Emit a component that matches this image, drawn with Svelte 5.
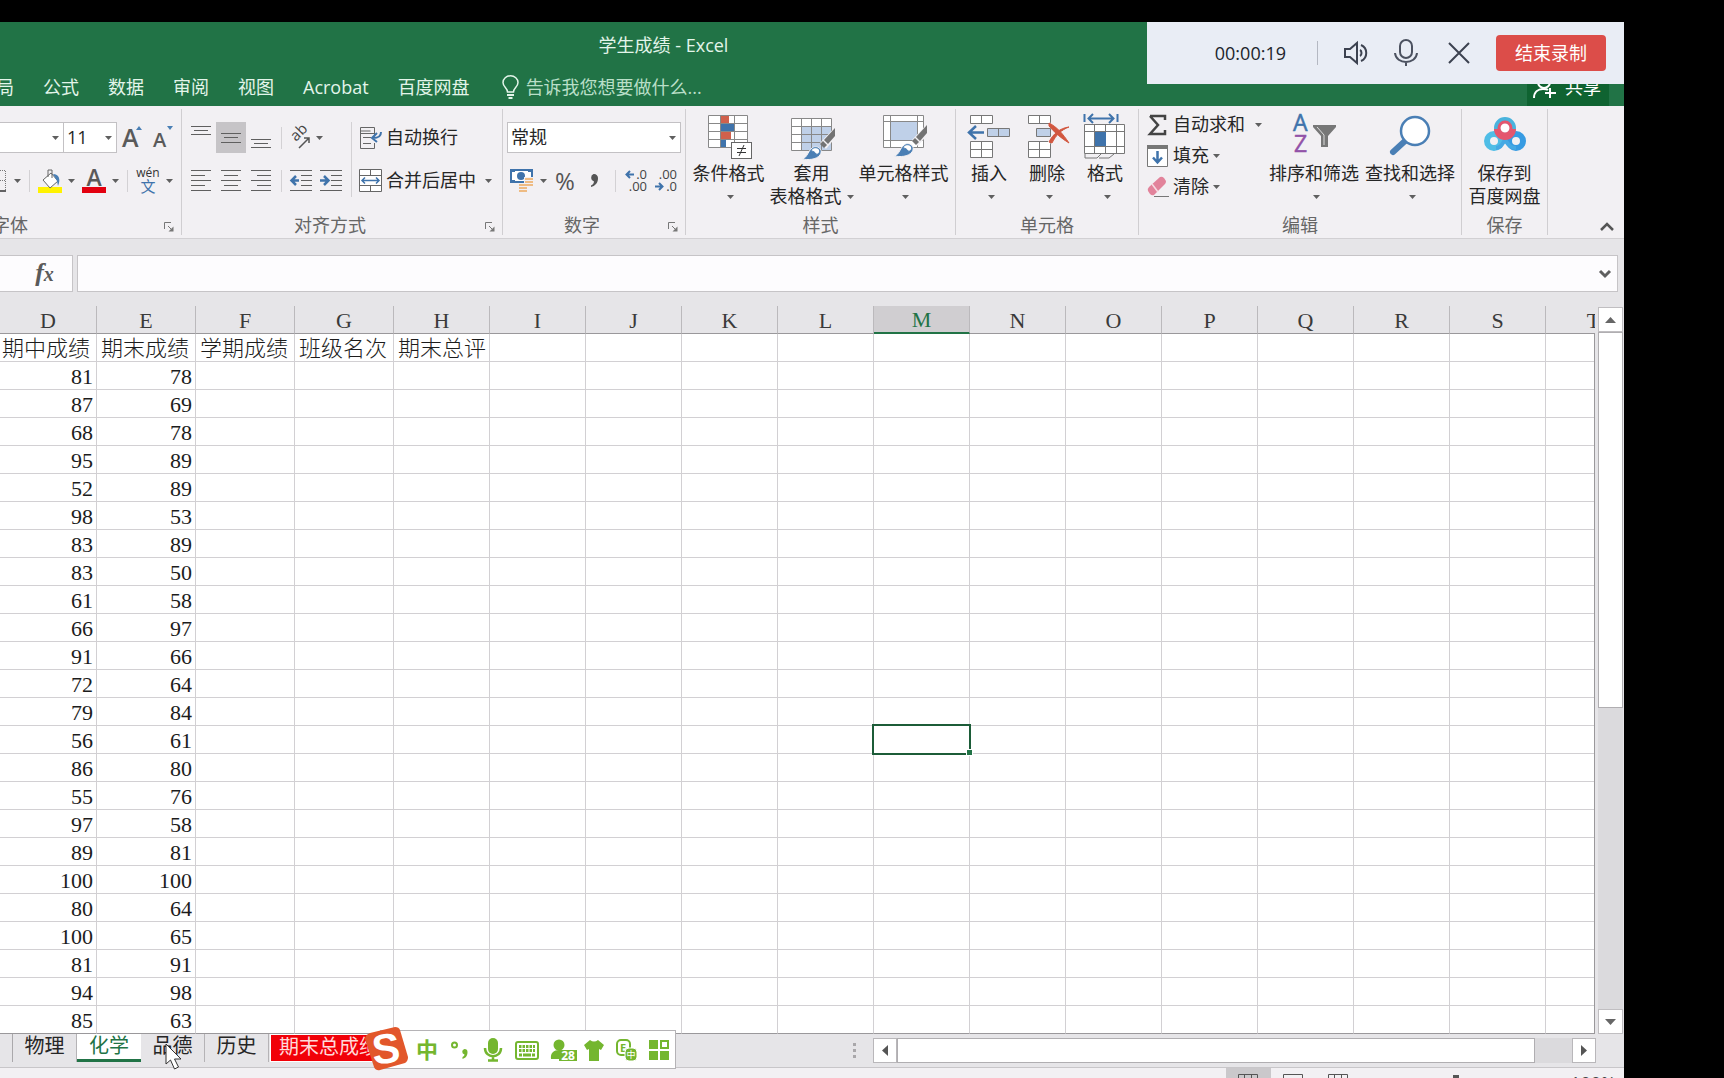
<script lang="ts">
  const menuTabs = ['局', '公式', '数据', '审阅', '视图', 'Acrobat', '百度网盘']

  const columns = 'DEFGHIJKLMNOPQRST'.split('')
  const activeColumn = 'M'
  const activeRow = 14

  const headings = ['期中成绩', '期末成绩', '学期成绩', '班级名次', '期末总评']
  const midterm = [81, 87, 68, 95, 52, 98, 83, 83, 61, 66, 91, 72, 79, 56, 86, 55, 97, 89, 100, 80, 100, 81, 94, 85]
  const final = [78, 69, 78, 89, 89, 53, 89, 50, 58, 97, 66, 64, 84, 61, 80, 76, 58, 81, 100, 64, 65, 91, 98, 63]

  const rows: (string | number)[][] = [headings, ...midterm.map((score, i) => [score, final[i]])]

  const sheets = [
    { name: '物理' },
    { name: '化学', active: true },
    { name: '品德' },
    { name: '历史' },
    { name: '期末总成绩', red: true },
  ]

  function colWidth(i: number) {
    if (i === 0) return 97
    return i < 4 ? 99 : 96
  }
</script>

{#snippet arrow()}
  <svg class="arrow" width="7" height="4" viewBox="0 0 7 4"><path d="M0 0h7L3.500 4z" fill="#5f5f5f" /></svg>
{/snippet}

{#snippet launcher(label: string)}
  <button class="launcher" aria-label={label}>
    <svg width="10" height="10" viewBox="0 0 10 10">
      <path d="M.5 7V.5H7M4 4l4 4" fill="none" stroke="#777" />
      <path d="M9.500 4.500v5h-5z" fill="#777" />
    </svg>
  </button>
{/snippet}

{#snippet lines(rowsOf: number[][], w: number, h: number)}
  <svg width={w} height={h} viewBox="0 0 {w} {h}">
    {#each rowsOf as [x, y, len]}
      <path d="M{x} {y + 0.5}h{len}" stroke="#5f5f5f" />
    {/each}
  </svg>
{/snippet}

{#snippet brush(dy: number)}
  <g transform="translate(0 {dy})">
    <path d="M46 12L30 29l6 6L46 23z" fill="#f2f0f3" />
    <path d="M45 14v8l-7 8-4-4z" fill="#737373" />
    <path d="M33 27l4 4-3 3-4-4z" fill="#737373" />
    <path d="M12 45c6-1 6-10 12-12 6-1 9 4 6 8-4 5-12 5-18 4z" fill="#4a7fb5" stroke="#f2f0f3" stroke-width="1" />
    <path d="M21 37c1-4 6-4 8-2 2 3-1 6-3 5-1-2-3-3-5-3z" fill="#fff" stroke="#4a7fb5" />
  </g>
{/snippet}

<div class="screen">
  <div class="window">
    <header class="top">
      <div class="title">学生成绩 - Excel</div>
      <nav class="menu">
        {#each menuTabs as tab}
          <button>{tab}</button>
        {/each}
        <button class="tell-me">
          <svg width="17" height="24" viewBox="0 0 17 24" fill="none" stroke="#e3f5ea" stroke-width="1.500">
            <path d="M5.500 17c0-4-4.500-5-4.500-9.500a7.500 6.700 0 0 1 15 0C16 12 11.500 13 11.500 17z" />
            <path d="M5 20h7M6.500 23h4" stroke-width="2" />
          </svg>
          <span>告诉我您想要做什么...</span>
        </button>
        <button class="share">
          <svg width="24" height="24" viewBox="0 0 24 24" fill="none" stroke="#fff" stroke-width="2">
            <circle cx="11" cy="7" r="6" />
            <path d="M1 23c0-6 4-9 9-9 2 0 4 0 5 1M17 13v10M12 18h11" />
          </svg>
          <span>共享</span>
        </button>
      </nav>

      <div class="recorder">
        <time>00:00:19</time>
        <span class="recorder__sep"></span>
        <button aria-label="声音">
          <svg width="24" height="24" viewBox="0 0 24 24" fill="none" stroke="#3c4250" stroke-width="2">
            <path d="M1 8h5l7-6v20l-7-6H1zM16 9c2 1 2 5 0 6M17 4c7 3 7 13 0 16" />
          </svg>
        </button>
        <button aria-label="麦克风">
          <svg width="24" height="28" viewBox="0 0 24 28" fill="none" stroke="#4c5260" stroke-width="2">
            <rect x="6" y="1" width="12" height="18" rx="6" />
            <path d="M1 14c1 12 21 12 22 0M12 23v4" />
          </svg>
        </button>
        <button class="recorder__close" aria-label="关闭">
          <svg width="22" height="22" viewBox="0 0 22 22" fill="none" stroke="#3c4250" stroke-width="2">
            <path d="M1 1l20 20M21 1L1 21" />
          </svg>
        </button>
        <button class="recorder__stop">结束录制</button>
      </div>
    </header>

    <section class="ribbon">
      <div class="group group--font">
        <div class="group__body">
          <div class="rows">
            <div class="row">
              <span class="combo combo--name">
                <select aria-label="字体名称"><option></option></select>
                {@render arrow()}
              </span>
              <span class="combo combo--size">
                <select aria-label="字号"><option>11</option></select>
                {@render arrow()}
              </span>
              <button class="grow" aria-label="增大字号">
                <svg width="20" height="26" viewBox="0 0 20 26">
                  <text x="-1" y="22" font-size="25" font-weight="600" fill="#5a5a5a">A</text>
                  <path d="M13 5l3-4 3 4z" fill="#4a7fb5" />
                </svg>
              </button>
              <button class="shrink" aria-label="减小字号">
                <svg width="20" height="26" viewBox="0 0 20 26">
                  <text x="-1" y="22" font-size="20" font-weight="600" fill="#5a5a5a">A</text>
                  <path d="M13 1l3 4 3-4z" fill="#4a7fb5" />
                </svg>
              </button>
            </div>
            <div class="row">
              <button class="split" aria-label="边框">
                <svg width="8" height="22" viewBox="0 0 8 22">
                  <path d="M0 .5h5.500V21M0 10.500h5" fill="none" stroke="#777" stroke-dasharray="1 1" />
                  <path d="M0 21h6" stroke="#333" stroke-width="1.500" />
                </svg>
                {@render arrow()}
              </button>
              <span class="sep"></span>
              <button class="split" aria-label="填充颜色">
                <svg width="24" height="24" viewBox="0 0 24 24">
                  <rect y="18" width="24" height="6" fill="#fff200" />
                  <path d="M5 11l8-7 7 8-8 7z" fill="#fff" stroke="#666" />
                  <path d="M10 8V1h4v8" fill="none" stroke="#666" />
                  <path d="M15 5c6 0 8 5 5 12l-1-5z" fill="#4a7fb5" />
                </svg>
                {@render arrow()}
              </button>
              <button class="split split--next" aria-label="字体颜色">
                <svg width="24" height="24" viewBox="0 0 24 24">
                  <text x="12" y="17" font-size="23" font-weight="600" fill="#5a5a5a" text-anchor="middle">A</text>
                  <rect y="18" width="24" height="6" fill="#e3000f" />
                </svg>
                {@render arrow()}
              </button>
              <span class="sep"></span>
              <button class="split" aria-label="拼音指南">
                <svg width="24" height="26" viewBox="0 0 24 26">
                  <text x="12" y="9" font-size="12" fill="#333" text-anchor="middle">wén</text>
                  <text x="12" y="24" font-size="15" fill="#3f73ab" text-anchor="middle">文</text>
                </svg>
                {@render arrow()}
              </button>
            </div>
          </div>
        </div>
        <div class="group__label">字体</div>
        {@render launcher('字体设置')}
      </div>

      <div class="group group--align">
        <div class="group__body">
          <div class="rows">
            <div class="row">
              <button class="tool" aria-label="顶端对齐">{@render lines([[0, 2, 20], [3, 6, 14], [0, 10, 20]], 20, 28)}</button>
              <button class="tool tool--on" aria-label="垂直居中">{@render lines([[0, 9, 20], [3, 13, 14], [0, 18, 20]], 20, 28)}</button>
              <button class="tool" aria-label="底端对齐">{@render lines([[0, 15, 20], [3, 19, 14], [0, 23, 20]], 20, 28)}</button>
              <span class="sep sep--tight"></span>
              <button class="split orient" aria-label="方向">
                <svg width="20" height="22" viewBox="0 0 20 22">
                  <text x="6" y="15" font-size="15" fill="#444" transform="rotate(-45 6 15)">ab</text>
                  <path d="M9 21L19 11M14 11h5v5" fill="none" stroke="#555" stroke-width="1.500" />
                </svg>
                {@render arrow()}
              </button>
            </div>
            <div class="row">
              <button class="tool" aria-label="左对齐">{@render lines([[0, 1, 20], [0, 6, 14], [0, 11, 20], [0, 16, 14], [0, 21, 20]], 20, 24)}</button>
              <button class="tool" aria-label="居中">{@render lines([[0, 1, 20], [3, 6, 14], [0, 11, 20], [3, 16, 14], [0, 21, 20]], 20, 24)}</button>
              <button class="tool" aria-label="右对齐">{@render lines([[0, 1, 20], [6, 6, 14], [0, 11, 20], [6, 16, 14], [0, 21, 20]], 20, 24)}</button>
              <span class="sep sep--tight"></span>
              {#each [{ label: '减少缩进量', d: 'M9 11.500H2M6 7l-4.500 4.500L6 16' }, { label: '增加缩进量', d: 'M0 11.500h8M4 7l4.500 4.500L4 16' }] as indent}
                <button class="tool" aria-label={indent.label}>
                  <svg width="22" height="24" viewBox="0 0 22 24" fill="none">
                    <path d="M0 1.500h22M11 6.500h11M11 11.500h11M11 16.500h11M0 21.500h22" stroke="#5f5f5f" />
                    <path d={indent.d} stroke="#3f73ab" stroke-width="2.500" />
                  </svg>
                </button>
              {/each}
            </div>
          </div>
          <span class="sep sep--tall"></span>
          <div class="rows">
            <div class="row">
              <button class="labelled">
                <svg width="24" height="24" viewBox="0 0 24 24" fill="none" stroke="#666">
                  <path d="M15.500 9V1.500h-14v21h14V17M1.500 7.500h14M4 11.500h8M4 17.500h8M1.500 5h10" />
                  <path d="M22 6c0 5-3 6-8 6M18 7l-5 5 5 4" stroke="#3f73ab" stroke-width="2" />
                </svg>
                <span>自动换行</span>
              </button>
            </div>
            <div class="row">
              <button class="labelled labelled--split">
                <svg width="24" height="24" viewBox="0 0 24 24" fill="none" stroke="#666">
                  <path d="M.5 .5h22v22H.5zM.5 6.500h22M.5 16.500h22M11.500 .5v6M11.500 16.500v6" fill="#fff" />
                  <path d="M3 11.500h17M6 8.500l-3 3 3 3M17 8.500l3 3-3 3" stroke="#3f73ab" stroke-width="1.500" />
                </svg>
                <span>合并后居中</span>
                {@render arrow()}
              </button>
            </div>
          </div>
        </div>
        <div class="group__label">对齐方式</div>
        {@render launcher('对齐设置')}
      </div>

      <div class="group group--number">
        <div class="group__body">
          <div class="rows">
            <div class="row">
              <span class="combo combo--format">
                <select aria-label="数字格式"><option>常规</option></select>
                {@render arrow()}
              </span>
            </div>
            <div class="row row--number">
              <button class="split" aria-label="会计数字格式">
                <svg width="24" height="24" viewBox="0 0 24 24">
                  <rect x="1" y="1" width="21" height="12" fill="#fff" stroke="#3f73ab" stroke-width="2" />
                  <path d="M0 0h5v3H0zM18 0h5v3h-5zM0 11h5v3H0z" fill="#3f73ab" />
                  <circle cx="11" cy="7" r="4" fill="#3f73ab" />
                  <path d="M14 8h10v11H14z" fill="#f2f0f3" />
                  <path d="M15 10h8M15 13h8M15 16h8M9 16h8M9 19h8M9 22h8" stroke="#eebb83" stroke-width="2" />
                </svg>
                {@render arrow()}
              </button>
              <button class="percent" aria-label="百分比样式">%</button>
              <button class="comma" aria-label="千位分隔样式">
                <svg width="10" height="15" viewBox="0 0 10 15">
                  <path d="M4.500 1a4 4 0 0 1 4.500 4.500C9 10 6 13 2 14v-1.500c2-1 3-2.500 3-4A4 4 0 0 1 4.500 1z" fill="#555" />
                </svg>
              </button>
              <span class="sep"></span>
              <button aria-label="增加小数位数">
                <svg width="24" height="24" viewBox="0 0 24 24" font-size="13" fill="#444">
                  <text x="23" y="10" text-anchor="end">.0</text>
                  <text x="23" y="22" text-anchor="end">.00</text>
                  <path d="M10 5.500H3M6 2L2.500 5.500 6 9" fill="none" stroke="#3f73ab" stroke-width="2" />
                </svg>
              </button>
              <button class="decimal" aria-label="减少小数位数">
                <svg width="24" height="24" viewBox="0 0 24 24" font-size="13" fill="#444">
                  <text x="23" y="10" text-anchor="end">.00</text>
                  <text x="23" y="22" text-anchor="end">.0</text>
                  <path d="M1 17.500h7M5 14l3.500 3.500L5 21" fill="none" stroke="#3f73ab" stroke-width="2" />
                </svg>
              </button>
            </div>
          </div>
        </div>
        <div class="group__label">数字</div>
        {@render launcher('数字设置')}
      </div>

      <div class="group group--styles">
        <div class="group__body group__body--big">
          <button class="big">
            <svg width="44" height="46" viewBox="0 0 44 46">
              <path d="M1.500 1.500h39v32h-39zM13.500 1.500v32M27.500 1.500v32M1.500 9.500h39M1.500 17.500h39M1.500 25.500h39" fill="#fff" stroke="#888" />
              <path d="M14 2h8v7h-8zM14 18h10v7H14z" fill="#d0614c" />
              <path d="M14 10h13v7H14zM14 26h5v7h-5z" fill="#3f73ab" />
              <rect x="24.500" y="28.500" width="20" height="16" fill="#fff" stroke="#666" />
              <path d="M30 34.500h9M30 38.500h9M37 31l-5 11" stroke="#333" />
            </svg>
            <span>条件格式</span>
            <span class="big__more big__more--arrow">{@render arrow()}</span>
          </button>
          <button class="big">
            <svg width="44" height="46" viewBox="0 0 44 46">
              <rect x="1.500" y="4.500" width="40" height="32" fill="#fff" />
              <rect x="12" y="12" width="29" height="24" fill="#bfd0e8" />
              <path d="M1.500 4.500h40v32h-40zM11.500 4.500v32M21.500 4.500v32M31.500 4.500v32M1.500 12.500h40M1.500 20.500h40M1.500 28.500h40" fill="none" stroke="#888" />
              {@render brush(0)}
            </svg>
            <span>套用</span>
            <span class="big__more">表格格式 {@render arrow()}</span>
          </button>
          <button class="big">
            <svg width="44" height="46" viewBox="0 0 44 46">
              <path d="M1.500 1.500h40v32h-40zM8.500 1.500v32M35.500 1.500v32M1.500 7.500h40M1.500 26.500h40" fill="#fff" stroke="#888" />
              <rect x="9" y="8" width="26" height="18" fill="#bfd0e8" />
              {@render brush(-3)}
            </svg>
            <span>单元格样式</span>
            <span class="big__more big__more--arrow">{@render arrow()}</span>
          </button>
        </div>
        <div class="group__label">样式</div>
      </div>

      <div class="group group--cells">
        <div class="group__body group__body--big group__body--cells">
          <button class="big">
            <svg width="44" height="46" viewBox="0 0 44 46">
              <path d="M3.500 1.500h22v8h-22zM14.500 1.500v8M3.500 27.500h22v16h-22zM14.500 27.500v16M3.500 35.500h22" fill="#fff" stroke="#777" />
              <path d="M20.500 14.500h22v8h-22zM31.500 14.500v8" fill="#bfd0e8" stroke="#777" />
              <path d="M17 18.500H2M9 12l-7 6.500L9 25" fill="none" stroke="#3f73ab" stroke-width="2.500" />
            </svg>
            <span>插入</span>
            <span class="big__more big__more--arrow">{@render arrow()}</span>
          </button>
          <button class="big">
            <svg width="44" height="46" viewBox="0 0 44 46">
              <path d="M3.500 1.500h22v8h-22zM14.500 1.500v8M3.500 27.500h22v16h-22zM14.500 27.500v16M3.500 35.500h22" fill="#fff" stroke="#777" />
              <path d="M11.500 14.500h14v8h-14z" fill="#bfd0e8" stroke="#777" />
              <path d="M25 10c7 4 13 11 18 19M43 12c-8 4-13 9-18 17" fill="none" stroke="#f2f0f3" stroke-width="5" />
              <path d="M24 9c8 4 14 11 20 20-7-4-15-11-20-17zM44 13c-8 3-13 8-17 16l-3-1c4-8 11-14 20-15z" fill="#d2573f" stroke="#d2573f" />
            </svg>
            <span>删除</span>
            <span class="big__more big__more--arrow">{@render arrow()}</span>
          </button>
          <button class="big">
            <svg width="44" height="46" viewBox="0 0 44 46">
              <path d="M1.500 0v8M34.500 0v8M6 4.500h24M10 0L5.500 4.500 10 9M26 0l4.500 4.500L26 9" fill="none" stroke="#3f73ab" stroke-width="2" />
              <path d="M1.500 10.500h40v29h-40zM11.500 10.500v29M22.500 10.500v29M33.500 10.500v29M1.500 17.500h40M1.500 32.500h40" fill="#fff" stroke="#777" />
              <path d="M12 18h11v14H12z" fill="#3f73ab" />
              <path d="M2 40v4h12l4-4M16 44h10l5-4" fill="none" stroke="#777" />
            </svg>
            <span>格式</span>
            <span class="big__more big__more--arrow">{@render arrow()}</span>
          </button>
        </div>
        <div class="group__label">单元格</div>
      </div>

      <div class="group group--edit">
        <div class="group__body group__body--edit">
          <div class="stack">
            <button class="labelled labelled--split">
              <svg width="22" height="22" viewBox="0 0 22 22">
                <path d="M3 2h15v4M3 2l8 9-8 9h15v-4" fill="none" stroke="#444" stroke-width="2.500" />
              </svg>
              <span>自动求和</span>
              {@render arrow()}
            </button>
            <button class="labelled">
              <svg width="22" height="22" viewBox="0 0 22 22">
                <path d="M.5 .5h20v21H.5z" fill="#fff" stroke="#777" />
                <path d="M0 0h21v4H0z" fill="#777" />
                <path d="M10.500 6v11M6 12.500l4.500 5 4.500-5" fill="none" stroke="#3f73ab" stroke-width="2.500" />
              </svg>
              <span>填充</span>
              {@render arrow()}
            </button>
            <button class="labelled">
              <svg width="22" height="22" viewBox="0 0 22 22">
                <path d="M13 1q2-1 4 1l2 3q0 2-1 3L7 19q-2 1-4-1l-2-3q-1-2 1-4z" fill="#e2839b" />
                <path d="M5 8l6 8" stroke="#f7dbe2" stroke-width="1.500" />
                <path d="M7 20.500h15" stroke="#777" />
              </svg>
              <span>清除</span>
              {@render arrow()}
            </button>
          </div>
          <button class="big">
            <svg width="46" height="46" viewBox="0 0 46 46">
              <text x="2" y="17" font-size="23" fill="#3f73ab" stroke="#3f73ab" stroke-width="0.500">A</text>
              <text x="3" y="38" font-size="23" fill="#9252a8" stroke="#9252a8" stroke-width="0.500">Z</text>
              <path d="M22 11h23v2l-8 9v11h-7V22l-8-9z" fill="#777" />
              <path d="M26 13l7 8v10" fill="none" stroke="#ddd" />
            </svg>
            <span>排序和筛选</span>
            <span class="big__more big__more--arrow">{@render arrow()}</span>
          </button>
          <button class="big">
            <svg width="46" height="46" viewBox="0 0 46 46">
              <path d="M18 27L6 38" stroke="#4a7fb5" stroke-width="6" stroke-linecap="round" />
              <circle cx="28" cy="17" r="14" fill="#fff" stroke="#4a7fb5" stroke-width="2.500" />
            </svg>
            <span>查找和选择</span>
            <span class="big__more big__more--arrow">{@render arrow()}</span>
          </button>
        </div>
        <div class="group__label">编辑</div>
      </div>

      <div class="group group--save">
        <div class="group__body group__body--big">
          <button class="big">
            <svg width="46" height="46" viewBox="0 0 46 46" fill="none" stroke-width="6">
              <circle cx="12" cy="27" r="7" stroke="#4fbde6" />
              <circle cx="34" cy="27" r="7" stroke="#379be2" />
              <path d="M14 34c5 0 6-4 9-8 3 4 5 8 11 8" stroke="#45a9e4" stroke-width="4" />
              <circle cx="23" cy="14" r="8" fill="#fff" stroke="#49b3dd" />
              <path d="M15 15a8 8 0 0 0 16 0" stroke="#e4566e" />
              <circle cx="23" cy="14" r="6" stroke="#e4566e" stroke-width="3" />
            </svg>
            <span>保存到</span>
            <span class="big__more">百度网盘</span>
          </button>
        </div>
        <div class="group__label">保存</div>
      </div>

      <button class="collapse" aria-label="折叠功能区">
        <svg width="14" height="10" viewBox="0 0 14 10"><path d="M1 9l6-6 6 6" fill="none" stroke="#555" stroke-width="2.500" /></svg>
      </button>
    </section>

    <section class="formula">
      <button class="formula__fx" aria-label="插入函数">f<small>x</small></button>
      <div class="formula__box">
        <input type="text" aria-label="编辑栏" />
        <button aria-label="展开编辑栏">
          <svg width="12" height="10" viewBox="0 0 12 10"><path d="M1 2l5 5 5-5" fill="none" stroke="#5f5f5f" stroke-width="3" /></svg>
        </button>
      </div>
    </section>

    <section class="sheet">
      <div class="sheet__view">
        <table>
          <colgroup>
            {#each columns as _, i}
              <col style="width: {colWidth(i)}px" />
            {/each}
          </colgroup>
          <thead>
            <tr>
              {#each columns as col}
                <th scope="col" class:active={col === activeColumn}>{col}</th>
              {/each}
            </tr>
          </thead>
          <tbody>
            {#each rows as row, r}
              <tr>
                {#each columns as col, c}
                  <td class:num={r > 0} class:selected={r === activeRow && col === activeColumn}>{row[c] ?? ''}</td>
                {/each}
              </tr>
            {/each}
          </tbody>
        </table>
      </div>
      <div class="vscroll">
        <button aria-label="向上滚动"><svg width="11" height="6" viewBox="0 0 11 6"><path d="M0 6h11L5.500 0z" fill="#666" /></svg></button>
        <div class="vscroll__track"><div class="vscroll__thumb"></div></div>
        <button aria-label="向下滚动"><svg width="11" height="6" viewBox="0 0 11 6"><path d="M0 0h11L5.500 6z" fill="#666" /></svg></button>
      </div>
    </section>

    <section class="bottom">
      <div class="sheets">
        {#each sheets as sheet}
          <button class:active={sheet.active} class:red={sheet.red}>{sheet.name}</button>
        {/each}
      </div>
      <div class="hscroll">
        <span class="hscroll__grip"></span>
        <button aria-label="向左滚动"><svg width="6" height="11" viewBox="0 0 6 11"><path d="M6 0v11L0 5.500z" fill="#555" /></svg></button>
        <div class="hscroll__track"><div class="hscroll__thumb"></div></div>
        <button aria-label="向右滚动"><svg width="6" height="11" viewBox="0 0 6 11"><path d="M0 0v11l6-5.500z" fill="#555" /></svg></button>
      </div>

      <div class="ime">
        <svg class="ime__logo" width="44" height="44" viewBox="0 0 44 44">
          <path d="M6 6L31 0q4 0 5 3l8 27q0 4-3 6L16 43q-4 1-6-3L1 12q0-4 5-6z" fill="#e2572b" />
          <text x="22" y="36" font-size="42" font-weight="700" font-family="Liberation Sans, sans-serif" fill="#fff" text-anchor="middle" transform="rotate(-6 22 22)">S</text>
        </svg>
        <button class="ime__zh">中</button>
        <button aria-label="标点">
          <svg width="22" height="24" viewBox="0 0 22 24">
            <circle cx="5.500" cy="7" r="2.500" fill="none" stroke="#74b62f" stroke-width="2" />
            <path d="M15.500 11a3 3 0 0 1 3 3c0 4-2 6-5 7v-2c1-.5 2-1.500 2-2.500a2.800 2.800 0 0 1 0-5.500z" fill="#74b62f" />
          </svg>
        </button>
        <button aria-label="语音">
          <svg width="22" height="24" viewBox="-2 0 22 24" fill="#74b62f">
            <rect x="4" y="0" width="10" height="16" rx="5" />
            <path d="M1 10c0 11 16 11 16 0M9 18v4M4 22.500h10" fill="none" stroke="#74b62f" stroke-width="2.500" />
          </svg>
        </button>
        <button aria-label="软键盘">
          <svg width="24" height="24" viewBox="0 0 24 24">
            <rect x="1" y="4" width="22" height="17" rx="2" fill="#fff" stroke="#74b62f" stroke-width="2" />
            <path d="M4 8.500h16M4 12.500h16" stroke="#74b62f" stroke-width="3" stroke-dasharray="2.500 1" />
            <path d="M4 17h3M8 17h8M17 17h3" stroke="#74b62f" stroke-width="3" />
          </svg>
        </button>
        <button class="ime__user" aria-label="用户">
          <svg width="28" height="24" viewBox="0 0 28 24">
            <circle cx="9" cy="7" r="5.500" fill="#74b62f" />
            <path d="M1 21c-1-6 3-9 8-9s8 3 8 9z" fill="#74b62f" />
            <rect x="9" y="12" width="18" height="11" fill="#74b62f" />
            <text x="18" y="22" font-size="12" font-weight="700" fill="#fff" text-anchor="middle">28</text>
          </svg>
        </button>
        <button aria-label="皮肤">
          <svg width="22" height="24" viewBox="0 0 22 24">
            <path d="M7 2q4 3 8 0l6 5-3 5-2-1v12H6V11l-2 1-3-5z" fill="#74b62f" />
          </svg>
        </button>
        <button aria-label="翻译">
          <svg width="22" height="24" viewBox="0 0 22 24">
            <rect x="1" y="2" width="13" height="15" rx="4" fill="#fff" stroke="#74b62f" stroke-width="2" />
            <text x="7" y="14" font-size="11" font-weight="700" fill="#74b62f" text-anchor="middle">E</text>
            <rect x="9" y="10" width="12" height="13" rx="4" fill="#74b62f" stroke="#fff" />
            <text x="15" y="20" font-size="9" fill="#fff" text-anchor="middle">中</text>
          </svg>
        </button>
        <button aria-label="工具箱">
          <svg width="20" height="24" viewBox="0 0 20 24" fill="#74b62f">
            <rect x="0" y="2" width="9" height="9" />
            <rect x="12" y="3" width="7" height="7" fill="#fff" stroke="#74b62f" stroke-width="2" />
            <rect x="0" y="13" width="9" height="9" />
            <rect x="11" y="13" width="9" height="9" />
          </svg>
        </button>
      </div>

      <svg class="cursor" width="18" height="27" viewBox="0 0 18 27">
        <path d="M1 1v20l4.500-4 4 9 4-2-4-8H16z" fill="#fff" stroke="#333" />
      </svg>
    </section>

    <footer class="status">
      <button class="status__view status__view--on" aria-label="普通">
        <svg width="20" height="18" viewBox="0 0 20 18"><path d="M.5 .5h19v17H.5zM6.500 .5v17M13.500 .5v17M.5 6.500h19M.5 12.500h19" fill="none" stroke="#555" /></svg>
      </button>
      <button class="status__view" aria-label="页面布局">
        <svg width="20" height="18" viewBox="0 0 20 18"><path d="M.5 .5h19v17H.5zM4.500 4.500h11v9h-11zM5 7.500h10" fill="none" stroke="#555" /></svg>
      </button>
      <button class="status__view" aria-label="分页预览">
        <svg width="20" height="18" viewBox="0 0 20 18"><path d="M.5 .5h19v17H.5zM6.500 .5v11M13.500 .5v11M.5 7.500h19" fill="none" stroke="#555" /></svg>
      </button>
      <input class="zoom" type="range" min="0" max="100" value="50" aria-label="缩放" />
      <button class="status__plus">+</button>
      <span class="status__percent">100%</span>
    </footer>
  </div>
</div>

<style>
  :global(body) {
    background: #000;
  }

  .screen {
    box-sizing: border-box;
    height: 100vh;
    padding: 22px 100px 0 0;
    overflow: hidden;
    background: #000;
    font-family: 'Open Sans', 'Noto Sans CJK SC', sans-serif;
    font-size: 18px;
    line-height: 23px;
    color: #262626;
  }

  .window {
    overflow: hidden;
    height: 100%;
    background: #e6e5e8;
  }

  button,
  select,
  input {
    margin: 0;
    padding: 0;
    border: none;
    border-radius: 0;
    background: none;
    font: inherit;
    color: inherit;
    white-space: nowrap;
  }

  svg {
    display: block;
    flex: none;
    overflow: visible;
  }

  .top {
    position: relative;
    background: #217346;
    color: #e3f5ea;
  }

  .title {
    padding-right: 297px;
    line-height: 46px;
    text-align: center;
  }

  .menu {
    display: flex;
    align-items: center;
    gap: 29px;
    height: 38px;
    margin-left: -4px;
  }

  .tell-me {
    display: flex;
    align-items: center;
    gap: 7px;
    padding-left: 3px;
    color: #b9dfc8;
  }

  .share {
    display: flex;
    align-items: center;
    gap: 8px;
    height: 37px;
    margin: 0 15px 0 auto;
    padding: 0 8px 0 6px;
    background: #0f6331;
    color: #fff;
  }

  .recorder {
    position: absolute;
    top: 0;
    right: 0;
    display: flex;
    align-items: center;
    box-sizing: border-box;
    height: 62px;
    padding: 0 18px 0 68px;
    background: #e9edf5;
    color: #20242c;
  }

  .recorder button {
    margin-left: 26px;
  }

  .recorder .recorder__close {
    margin-left: 30px;
  }

  .recorder__sep {
    width: 1px;
    height: 24px;
    margin-left: 31px;
    background: #b4b8c2;
  }

  .recorder .recorder__stop {
    padding: 0 19px;
    border-radius: 4px;
    background: #dc4d49;
    color: #fff;
    line-height: 36px;
  }

  .ribbon {
    display: flex;
    height: 132px;
    border-bottom: 1px solid #d2d0d3;
    background: #f2f0f3;
  }

  .group {
    position: relative;
    display: flex;
    flex: none;
    flex-direction: column;
    box-sizing: border-box;
    margin: 3px 0;
    border-right: 1px solid #d0ced1;
  }

  .group--font { width: 182px; }
  .group--align { width: 321px; }
  .group--number { width: 183px; }
  .group--styles { width: 270px; }
  .group--cells { width: 183px; }
  .group--edit { width: 323px; }
  .group--save { width: 86px; }

  .group__body {
    display: flex;
    flex: 1;
  }

  .group--align .group__body,
  .group--number .group__body {
    padding-left: 4px;
  }

  .group__body--big {
    justify-content: center;
    gap: 5px;
    padding-top: 5px;
  }

  .group__body--cells {
    gap: 14px;
  }

  .group__label {
    color: #666;
    line-height: 20px;
    text-align: center;
  }

  .group--align .group__label,
  .group--number .group__label {
    padding-right: 24px;
  }

  .group--font .group__label {
    margin-left: -8px;
    text-align: left;
  }

  .launcher {
    position: absolute;
    right: 7px;
    bottom: 3px;
  }

  .rows {
    display: flex;
    flex-direction: column;
    gap: 12px;
    padding-top: 13px;
  }

  .row {
    display: flex;
    align-items: center;
    height: 31px;
  }

  .row--number {
    padding-left: 3px;
  }

  .combo {
    display: flex;
    align-items: center;
    box-sizing: border-box;
    height: 31px;
    padding-right: 4px;
    border: 1px solid #c3c1c4;
    background: #fff;
  }

  .combo select {
    flex: 1;
    min-width: 0;
    padding-left: 3px;
    appearance: none;
  }

  .combo--name {
    width: 64px;
    border-left: none;
  }

  .combo--size {
    width: 54px;
    margin-left: -1px;
  }

  .combo--format {
    width: 174px;
  }

  .grow {
    margin-left: 6px;
  }

  .shrink {
    margin-left: 11px;
  }

  .split {
    display: flex;
    align-items: center;
    gap: 6px;
  }

  .split--next {
    margin-left: 7px;
  }

  .orient {
    margin-left: 4px;
  }

  .sep {
    width: 1px;
    height: 22px;
    margin: 0 8px;
    background: #d3d1d4;
  }

  .sep--tight {
    margin: 0 4px 0 5px;
  }

  .sep--tall {
    height: 75px;
    margin: 13px 7px 0 5px;
  }

  .tool {
    display: flex;
    align-items: center;
    justify-content: center;
    width: 30px;
    height: 31px;
  }

  .tool--on {
    background: #c6c4c7;
  }

  .labelled {
    display: flex;
    align-items: center;
    gap: 3px;
  }

  .labelled--split .arrow {
    margin-left: 6px;
  }

  .percent {
    margin-left: 8px;
    font-size: 24px;
    color: #555;
  }

  .comma {
    margin: 0 8px 0 14px;
  }

  .decimal {
    margin-left: 6px;
  }

  .big {
    display: flex;
    flex-direction: column;
    align-items: center;
    align-self: flex-start;
  }

  .big > svg {
    margin-bottom: 2px;
  }

  .big__more {
    display: flex;
    align-items: center;
    gap: 5px;
    height: 23px;
  }

  .big__more--arrow {
    padding-left: 4px;
  }

  .group__body--cells .big {
    width: 44px;
  }

  .group__body--edit {
    gap: 6px;
    padding-left: 8px;
  }

  .group__body--edit .big {
    padding-top: 5px;
  }

  .stack {
    display: flex;
    flex-direction: column;
  }

  .stack .labelled {
    gap: 4px;
    height: 31px;
  }

  .stack .labelled--split .arrow {
    margin: 0 1px 0 6px;
  }

  .collapse {
    align-self: flex-end;
    margin: 0 10px 7px auto;
  }

  .formula {
    display: flex;
    gap: 4px;
    padding: 16px 6px 14px 0;
  }

  .formula__fx {
    width: 73px;
    height: 37px;
    box-sizing: border-box;
    padding-left: 17px;
    border: 1px solid #c6c4c7;
    border-left: none;
    background: #fdfcfe;
    color: #5a5a5a;
    font: italic 700 26px/30px 'Liberation Serif', serif;
  }

  .formula__fx small {
    font-size: 20px;
  }

  .formula__box {
    display: flex;
    flex: 1;
    box-sizing: border-box;
    height: 37px;
    padding-right: 6px;
    border: 1px solid #c6c4c7;
    background: #fdfcfe;
  }

  .formula__box input {
    flex: 1;
    padding-left: 6px;
  }

  .sheet {
    display: flex;
  }

  .sheet__view {
    position: relative;
    flex: 1;
    min-width: 0;
    overflow: hidden;
    background: #fff;
  }

  .sheet__view::after {
    content: '';
    position: absolute;
    top: 27px;
    right: 0;
    bottom: 0;
    width: 1px;
    background: #9a989b;
  }

  table {
    table-layout: fixed;
    width: 1642px;
    border-spacing: 0;
    font-family: 'Liberation Serif', 'Noto Sans CJK SC', serif;
    font-size: 22px;
    line-height: 24px;
    color: #1c1c1c;
  }

  th,
  td {
    box-sizing: border-box;
    height: 28px;
    padding: 3px 0 0;
    overflow: hidden;
    white-space: nowrap;
  }

  th {
    border-right: 1px solid #bbb9bc;
    border-bottom: 1px solid #9a989b;
    background: #e6e5e8;
    color: #3a3a3a;
    font-weight: 400;
  }

  th.active {
    padding-top: 2px;
    border-bottom: 2px solid #217346;
    background: #d0ced1;
    color: #217346;
  }

  td {
    padding-left: 4px;
    border-right: 1px solid #d2d0d3;
    border-bottom: 1px solid #d2d0d3;
    font-weight: 300;
  }

  td:first-child {
    padding-left: 2px;
  }

  td.num {
    padding: 3px 3px 0 0;
    text-align: right;
  }

  tbody tr:last-child td {
    border-bottom-color: #9a989b;
  }

  td.selected {
    position: relative;
    overflow: visible;
  }

  td.selected::before {
    content: '';
    position: absolute;
    inset: -2px;
    border: 2px solid #1c5c38;
  }

  td.selected::after {
    content: '';
    position: absolute;
    right: -4px;
    bottom: -3px;
    width: 5px;
    height: 5px;
    border: 1px solid #fff;
    background: #217346;
  }

  .vscroll {
    display: flex;
    flex-direction: column;
    width: 25px;
    margin: 1px 1px 0 3px;
  }

  .vscroll button {
    display: flex;
    align-items: center;
    justify-content: center;
    box-sizing: border-box;
    height: 25px;
    border: 1px solid #c0bec1;
    background: #fff;
  }

  .vscroll__track {
    flex: 1;
    background: #dbdadd;
  }

  .vscroll__thumb {
    box-sizing: border-box;
    height: 55.5%;
    border: 1px solid #b0aeb1;
    background: #fff;
  }

  .bottom {
    position: relative;
    display: flex;
    justify-content: space-between;
    height: 33px;
  }

  .sheets {
    display: flex;
    margin-left: 12px;
    border-left: 1px solid #aaa8ab;
    height: 28px;
    font-size: 20px;
    line-height: 24px;
  }

  .sheets button {
    display: flex;
    justify-content: center;
    box-sizing: border-box;
    width: 64px;
    height: 28px;
    border-right: 1px solid #b5b3b6;
  }

  .sheets .active {
    border-right: none;
    border-bottom: 3px solid #217346;
    background: #fff;
    color: #217346;
  }

  .sheets .red {
    width: 118px;
    margin-left: 1px;
    border: 1px solid #fff;
    background: #f10008;
    color: #ffd9d9;
  }

  .hscroll {
    display: flex;
    align-items: center;
    width: 743px;
    margin-right: 28px;
  }

  .hscroll__grip {
    width: 3px;
    height: 15px;
    margin-right: 17px;
    background: repeating-linear-gradient(#a9a7aa 0 3px, transparent 3px 6px);
  }

  .hscroll button {
    display: flex;
    align-items: center;
    justify-content: center;
    box-sizing: border-box;
    width: 24px;
    height: 25px;
    border: 1px solid #b9b7ba;
    background: #fff;
  }

  .hscroll__track {
    flex: 1;
    height: 25px;
    background: #dbdadd;
  }

  .hscroll__thumb {
    box-sizing: border-box;
    width: 94.5%;
    height: 25px;
    border: 1px solid #b0aeb1;
    background: #fff;
  }

  .ime {
    position: absolute;
    top: -4px;
    left: 380px;
    display: flex;
    align-items: center;
    gap: 11px;
    box-sizing: border-box;
    width: 296px;
    height: 39px;
    padding-left: 35px;
    border: 1px solid #b5b3b6;
    background: #fff;
  }

  .ime__logo {
    position: absolute;
    top: -4px;
    left: -17px;
  }

  .ime__zh {
    color: #74b62f;
    font-size: 22px;
    font-weight: 700;
  }

  .ime__user {
    margin-right: -6px;
  }

  .cursor {
    position: absolute;
    top: 9px;
    left: 165px;
  }

  .status {
    display: flex;
    align-items: center;
    justify-content: flex-end;
    height: 30px;
    padding-right: 8px;
    border-top: 1px solid #c8c6c9;
    background: #f2f0f3;
    color: #444;
  }

  .status__view {
    display: flex;
    align-items: center;
    justify-content: center;
    width: 45px;
    height: 30px;
  }

  .status__view--on {
    background: #cac8cb;
  }

  .zoom {
    width: 120px;
    height: 18px;
    margin: 0 22px 0 35px;
    appearance: none;
    background: linear-gradient(#999, #999) center / 100% 1px no-repeat;
  }

  .zoom::-webkit-slider-thumb {
    appearance: none;
    width: 6px;
    height: 16px;
    background: #555;
  }

  .status__plus {
    margin-right: 21px;
    font-size: 20px;
  }
</style>
